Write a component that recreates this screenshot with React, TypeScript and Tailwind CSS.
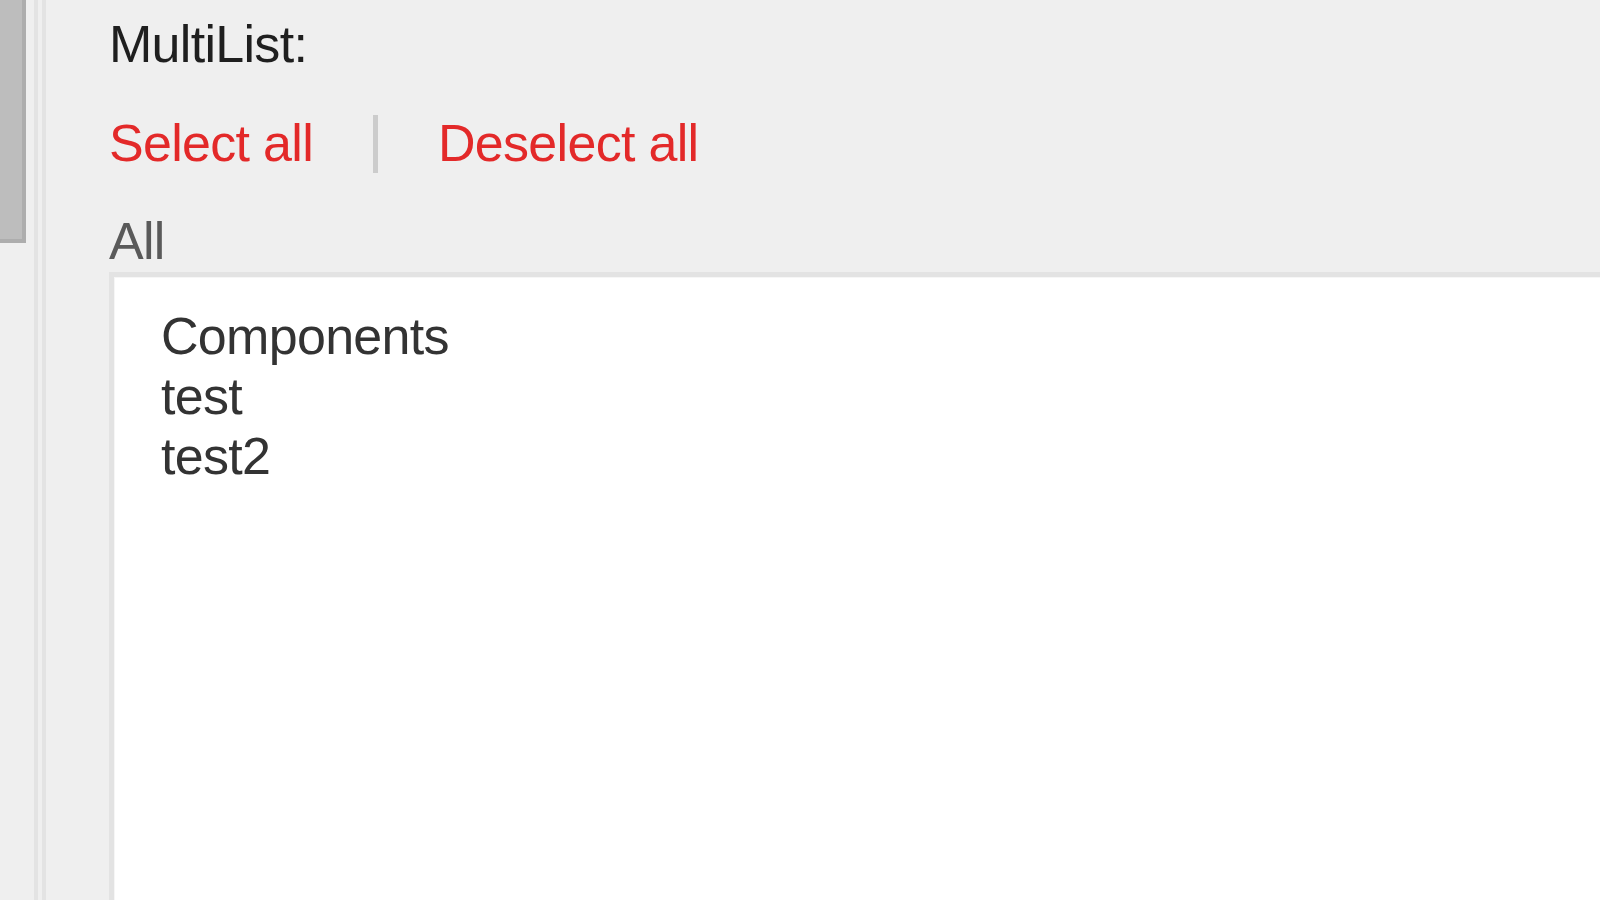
export default function App() {
  const items = ["Components", "test", "test2"]

  return (
    <div className="flex h-[900px] w-full overflow-hidden bg-[#efefef] font-['Liberation_Sans',Arial,sans-serif] text-[52px] leading-[60px] tracking-[-0.7px]">
      {/* Scrollbar thumb */}
      <div className="w-[26px] shrink-0">
        <div className="h-[243px] w-[26px] border-r-4 border-b-4 border-[#adadad] bg-[#bdbdbd]" />
      </div>

      {/* Divider rails */}
      <div className="ml-[8px] w-[4px] shrink-0 bg-[#e3e3e3]" />
      <div className="ml-[4px] w-[4px] shrink-0 bg-[#e3e3e3]" />

      {/* Content */}
      <div className="flex min-w-0 flex-1 flex-col pl-[63px] pt-[14px]">
        <div className="text-[#1f1f1f]">MultiList:</div>

        <div className="mt-[39px] flex items-center text-[#e32929]">
          <span>Select all</span>
          <span className="mx-[60px] mt-[2px] h-[58px] w-[5px] bg-[#cccccc]" />
          <span>Deselect all</span>
        </div>

        <div className="mt-[38px] text-[#5a5a5a]">All</div>

        <div className="mt-[1px] flex-1 border-l-[5px] border-t-[5px] border-[#e3e3e3] bg-white pl-[47px] pt-[29px] text-[#333333] shadow-[inset_1px_1px_0_#f6f6f6]">
          {items.map((item) => (
            <div key={item}>{item}</div>
          ))}
        </div>
      </div>
    </div>
  )
}
